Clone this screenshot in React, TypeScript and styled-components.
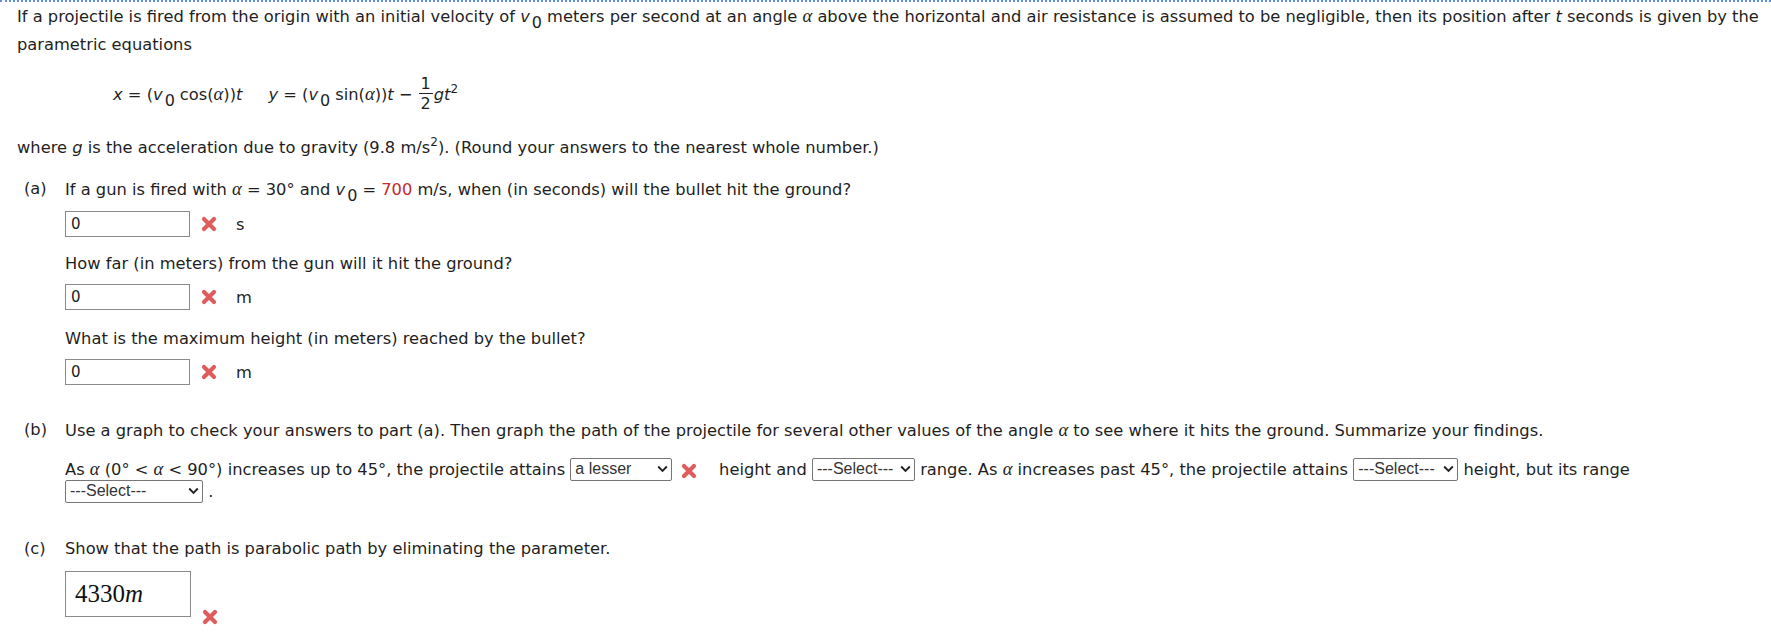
import React from "react";
import styled, { createGlobalStyle } from "styled-components";

const GlobalStyle = createGlobalStyle`
  html, body { margin: 0; padding: 0; background: #ffffff; }
  body {
    font-family: Verdana, "DejaVu Sans", sans-serif;
    font-size: 16.3px;
    color: #1f1f1f;
  }
`;

const Page = styled.div`
  border-top: 2px dotted #5b8ee6;
  padding: 0 0 0 17px;
`;

const Intro = styled.p`
  margin: 0;
  line-height: 28px;
`;

const Para = styled.p<{ $top?: number }>`
  margin: ${(p) => p.$top ?? 0}px 0 0;
  line-height: 22px;
`;

const Equations = styled.div`
  margin: 17px 0 0 96px;
  height: 36px;
  display: flex;
  align-items: center;
  gap: 26px;
`;

const Eq = styled.span`
  display: inline-flex;
  align-items: center;
  white-space: pre;
`;

const V = styled.i`
  font-style: italic;
`;

const Greek = styled.i`
  font-family: "Liberation Serif", "DejaVu Serif", serif;
  font-style: italic;
  font-size: 18.5px;
`;

const Sub = styled.sub`
  font-size: 16px;
  vertical-align: -6px;
  line-height: 0;
  margin: 0 5px 0 2px;
`;

const Sup = styled.sup`
  font-size: 12px;
  vertical-align: 7px;
  line-height: 0;
`;

const Frac = styled.span`
  display: inline-flex;
  flex-direction: column;
  align-items: center;
  margin: 0 1px 0 6px;
`;

const FracNum = styled.span`
  display: block;
  font-size: 16px;
  line-height: 18px;
  padding: 0 2px;
  border-bottom: 1px solid #222;
`;

const FracDen = styled.span`
  display: block;
  font-size: 16px;
  line-height: 19px;
`;

const Red = styled.span`
  color: #c12c2c;
`;

const Part = styled.section<{ $top: number }>`
  display: grid;
  grid-template-columns: 41px 1fr;
  margin-top: ${(p) => p.$top}px;
  padding-left: 7px;
`;

const Label = styled.div`
  line-height: 22px;
`;

const Body = styled.div`
  display: flex;
  flex-direction: column;
  align-items: flex-start;
`;

const Question = styled.div<{ $top?: number }>`
  line-height: 22px;
  margin-top: ${(p) => p.$top ?? 0}px;
`;

const AnswerRow = styled.div<{ $top: number }>`
  display: flex;
  align-items: center;
  margin-top: ${(p) => p.$top}px;
`;

const InputBox = styled.div`
  box-sizing: border-box;
  width: 125px;
  height: 26px;
  border: 1px solid #8a8a8a;
  padding: 0 5px;
  display: flex;
  align-items: center;
  font-size: 15px;
  color: #222;
`;

const MathBox = styled.div`
  box-sizing: border-box;
  width: 126px;
  height: 46px;
  border: 1px solid #8a8a8a;
  padding: 0 9px;
  display: flex;
  align-items: center;
  font-family: "Liberation Serif", "DejaVu Serif", serif;
  font-size: 25px;
  color: #111;
  & i { font-style: italic; }
`;

const Unit = styled.span`
  margin-left: 18px;
`;

const MarkWrap = styled.span<{ $gap?: number; $top?: number }>`
  display: inline-flex;
  margin-left: ${(p) => p.$gap ?? 10}px;
  margin-top: ${(p) => p.$top ?? 0}px;
  vertical-align: middle;
`;

const BigRow = styled.div`
  display: flex;
  align-items: flex-start;
  margin-top: 11px;
`;

const Sentence = styled.div`
  margin-top: 16px;
  line-height: 22px;
`;

const SelectBox = styled.span<{ $w: number }>`
  box-sizing: border-box;
  display: inline-flex;
  align-items: center;
  justify-content: space-between;
  vertical-align: middle;
  width: ${(p) => p.$w}px;
  height: 23px;
  border: 1px solid #767676;
  border-radius: 2px;
  padding: 0 3px 0 4px;
  font-family: Arial, "Liberation Sans", sans-serif;
  font-size: 16px;
  color: #333;
  background: #fff;
  margin-top: -3px;
`;

const XMark = () => (
  <svg width="18" height="18" viewBox="0 0 18 18" aria-hidden>
    <path
      d="M4 4 L14 14 M14 4 L4 14"
      stroke="#de5c5c"
      strokeWidth="4.2"
      strokeLinecap="round"
      fill="none"
    />
  </svg>
);

const Chevron = () => (
  <svg width="11" height="8" viewBox="0 0 11 8" aria-hidden>
    <path d="M1.2 1.5 L5.5 5.8 L9.8 1.5" stroke="#222" strokeWidth="1.9" fill="none" />
  </svg>
);

const Select = ({ w, text }: { w: number; text: string }) => (
  <SelectBox $w={w}>
    <span>{text}</span>
    <Chevron />
  </SelectBox>
);

const Answer = ({ top, unit }: { top: number; unit: string }) => (
  <AnswerRow $top={top}>
    <InputBox>0</InputBox>
    <MarkWrap>
      <XMark />
    </MarkWrap>
    <Unit>{unit}</Unit>
  </AnswerRow>
);

const v0 = (
  <>
    <V>v</V>
    <Sub>0</Sub>
  </>
);

export default function App() {
  return (
    <>
      <GlobalStyle />
      <Page>
        <Intro>
          If a projectile is fired from the origin with an initial velocity of {v0}
          meters per second at an angle <Greek>α</Greek> above the horizontal and air
          resistance is assumed to be negligible, then its position after <V>t</V> seconds is
          given by the parametric equations
        </Intro>
        <Equations>
          <Eq>
            <span>
              <V>x</V> = ({v0}cos(<Greek>α</Greek>))<V>t</V>
            </span>
          </Eq>
          <Eq>
            <span>
              <V>y</V> = ({v0}sin(<Greek>α</Greek>))<V>t</V> −
            </span>
            <Frac>
              <FracNum>1</FracNum>
              <FracDen>2</FracDen>
            </Frac>
            <span>
              <V>g</V>
              <V>t</V>
              <Sup>2</Sup>
            </span>
          </Eq>
        </Equations>
        <Para $top={25}>
          where <V>g</V> is the acceleration due to gravity (9.8 m/s<Sup>2</Sup>). (Round your
          answers to the nearest whole number.)
        </Para>

        <Part $top={19}>
          <Label>(a)</Label>
          <Body>
            <Question>
              If a gun is fired with <Greek>α</Greek> = 30° and {v0}= <Red>700</Red> m/s, when
              (in seconds) will the bullet hit the ground?
            </Question>
            <Answer top={10} unit="s" />
            <Question $top={16}>How far (in meters) from the gun will it hit the ground?</Question>
            <Answer top={9} unit="m" />
            <Question $top={18}>What is the maximum height (in meters) reached by the bullet?</Question>
            <Answer top={9} unit="m" />
          </Body>
        </Part>

        <Part $top={34}>
          <Label>(b)</Label>
          <Body>
            <Question>
              Use a graph to check your answers to part (a). Then graph the path of the
              projectile for several other values of the angle <Greek>α</Greek> to see where it
              hits the ground. Summarize your findings.
            </Question>
            <Sentence>
              As <Greek>α</Greek> (0° &lt; <Greek>α</Greek> &lt; 90°) increases up to 45°, the
              projectile attains <Select w={102} text="a lesser" />
              <MarkWrap $gap={8}>
                <XMark />
              </MarkWrap>
              &nbsp;&nbsp;&nbsp; height and <Select w={103} text="---Select---" /> range. As{" "}
              <Greek>α</Greek> increases past 45°, the projectile attains{" "}
              <Select w={105} text="---Select---" /> height, but its range
              <br />
              <Select w={138} text="---Select---" /> .
            </Sentence>
          </Body>
        </Part>

        <Part $top={35}>
          <Label>(c)</Label>
          <Body>
            <Question>Show that the path is parabolic path by eliminating the parameter.</Question>
            <BigRow>
              <MathBox>
                4330<i>m</i>
              </MathBox>
              <MarkWrap $gap={10} $top={37}>
                <XMark />
              </MarkWrap>
            </BigRow>
          </Body>
        </Part>
      </Page>
    </>
  );
}
